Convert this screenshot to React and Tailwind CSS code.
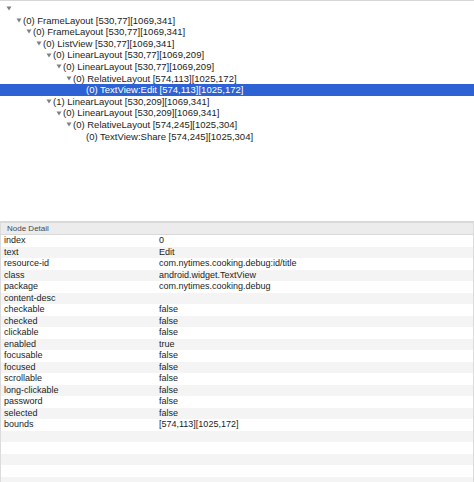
import React from "react";

const tree = [
	{ level: 0, label: "", open: true },
	{ level: 1, label: "(0) FrameLayout [530,77][1069,341]", open: true },
	{ level: 2, label: "(0) FrameLayout [530,77][1069,341]", open: true },
	{ level: 3, label: "(0) ListView [530,77][1069,341]", open: true },
	{ level: 4, label: "(0) LinearLayout [530,77][1069,209]", open: true },
	{ level: 5, label: "(0) LinearLayout [530,77][1069,209]", open: true },
	{ level: 6, label: "(0) RelativeLayout [574,113][1025,172]", open: true },
	{ level: 7, label: "(0) TextView:Edit [574,113][1025,172]", selected: true },
	{ level: 4, label: "(1) LinearLayout [530,209][1069,341]", open: true },
	{ level: 5, label: "(0) LinearLayout [530,209][1069,341]", open: true },
	{ level: 6, label: "(0) RelativeLayout [574,245][1025,304]", open: true },
	{ level: 7, label: "(0) TextView:Share [574,245][1025,304]" },
];

const details = [
	["index", "0"],
	["text", "Edit"],
	["resource-id", "com.nytimes.cooking.debug:id/title"],
	["class", "android.widget.TextView"],
	["package", "com.nytimes.cooking.debug"],
	["content-desc", ""],
	["checkable", "false"],
	["checked", "false"],
	["clickable", "false"],
	["enabled", "true"],
	["focusable", "false"],
	["focused", "false"],
	["scrollable", "false"],
	["long-clickable", "false"],
	["password", "false"],
	["selected", "false"],
	["bounds", "[574,113][1025,172]"],
	["", ""],
	["", ""],
	["", ""],
	["", ""],
	["", ""],
];

function Triangle() {
	return (
		<svg width="6" height="5" viewBox="0 0 6 5" className="shrink-0">
			<path d="M0.5 0.5 L5.5 0.5 L3 4.5 Z" fill="#808080" />
		</svg>
	);
}

export default function App() {
	return (
		<div
			className="w-[474px] h-[482px] overflow-hidden bg-white flex flex-col"
			style={{ fontFamily: '"Liberation Sans", Arial, sans-serif' }}
		>
			{/* hierarchy tree */}
			<div className="h-[221px] shrink-0 border-t border-[#d6d6d6] pt-[2px]">
				{tree.map((n, i) => (
					<div
						key={i}
						className={`h-[11.6px] flex items-center text-[9.5px] leading-none whitespace-nowrap ${
							n.selected ? "bg-[#2c62d3] text-white" : "text-[#1c1c1c]"
						}`}
						style={{ paddingLeft: n.open ? 6 + n.level * 10 : 86 }}
					>
						{n.open && <Triangle />}
						{n.label && <span className={n.open ? "ml-[1px]" : ""}>{n.label}</span>}
					</div>
				))}
			</div>

			{/* node detail table */}
			<div className="flex-1 flex flex-col border-t-2 border-[#d9d9d9] border-x border-x-[#dcdcdc]">
				<div className="h-[12px] shrink-0 bg-[#ececec] border-b border-[#d8d8d8] flex items-center pl-[6px] text-[8px] text-[#4a4a4a] leading-none">
					Node Detail
				</div>
				{details.map(([k, v], i) => (
					<div
						key={i}
						className={`h-[11.5px] shrink-0 flex items-center text-[9px] leading-none text-[#1c1c1c] whitespace-nowrap ${
							i % 2 === 1 ? "bg-[#f4f4f4]" : "bg-white"
						}`}
					>
						<span className="w-[158px] pl-[3px] shrink-0">{k}</span>
						<span>{v}</span>
					</div>
				))}
			</div>
		</div>
	);
}
